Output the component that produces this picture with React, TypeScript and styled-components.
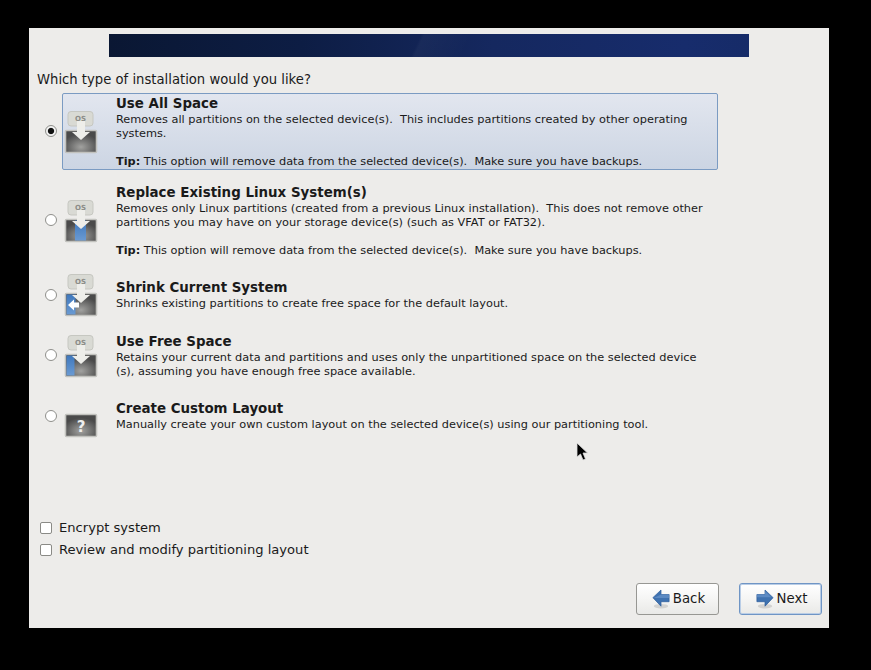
import styled, { createGlobalStyle } from 'styled-components';

const GlobalStyle = createGlobalStyle`
  html, body {
    margin: 0;
    padding: 0;
    background: #000;
  }
  body {
    font-family: "DejaVu Sans", sans-serif;
    color: #1a1a1a;
  }
`;

const Screen = styled.div`
  position: relative;
  width: 871px;
  height: 670px;
  padding: 28px 0 0 29px;
  box-sizing: border-box;
  background: #000;
  overflow: hidden;
`;

const Window = styled.main`
  width: 800px;
  height: 600px;
  box-sizing: border-box;
  padding: 6px 7px 13px 8px;
  background: #edecea;
  display: flex;
  flex-direction: column;
`;

const Banner = styled.div`
  width: 640px;
  height: 23px;
  margin-left: 72px;
  flex: none;
  background:
    linear-gradient(115deg, transparent 48%, rgba(255, 255, 255, 0.03) 48.5%, transparent 56%),
    linear-gradient(90deg, #0a1733 0%, #0d1d44 30%, #15285f 60%, #172c6c 90%, #162b68 100%);
`;

const Question = styled.h1`
  margin: 14px 0 5px;
  font-size: 13.2px;
  line-height: 17px;
  font-weight: 400;
`;

const Options = styled.div`
  display: flex;
  flex-direction: column;
  gap: 12px;
  width: 681px;
`;

const Option = styled.label`
  display: flex;
  align-items: center;
`;

const RadioSlot = styled.div`
  width: 25px;
  flex: none;
  display: flex;
  padding: 0 0 1px 8px;
  box-sizing: border-box;
`;

const Radio = styled.input.attrs({ type: 'radio', name: 'layout' })`
  appearance: none;
  width: 12px;
  height: 12px;
  margin: 0;
  border: 1px solid #8f8f8b;
  border-radius: 50%;
  background: #fff;
  box-sizing: border-box;

  &:checked {
    background: radial-gradient(circle, #111 0 2.6px, #555 3px, #f2f2f2 3.6px);
  }
`;

const Card = styled.div<{ $selected?: boolean }>`
  flex: 1;
  display: flex;
  align-items: center;
  gap: 18px;
  min-height: 48px;
  box-sizing: border-box;
  padding: 1px 2px 1px 1px;
  border: 1px solid ${(p) => (p.$selected ? '#7b9bc2' : 'transparent')};
  border-radius: 2px;
  background: ${(p) => (p.$selected ? 'linear-gradient(180deg, #e2e6ef 0%, #ccd5e3 100%)' : 'transparent')};
`;

const Body = styled.div<{ $short?: boolean }>`
  display: flex;
  flex-direction: column;
  padding-bottom: ${(p) => (p.$short ? '1px' : '0')};
`;

const Title = styled.div`
  font-size: 13.4px;
  line-height: 17px;
  font-weight: 700;
`;

const Description = styled.div`
  font-size: 11.33px;
  line-height: 14px;
  white-space: pre;
`;

const Checks = styled.div`
  margin-top: auto;
  display: flex;
  flex-direction: column;
  gap: 5px;
  padding-left: 3px;
`;

const CheckRow = styled.label`
  display: flex;
  align-items: center;
  gap: 7px;
  font-size: 13.1px;
  line-height: 17px;
`;

const Check = styled.input.attrs({ type: 'checkbox' })`
  appearance: none;
  width: 12px;
  height: 12px;
  margin: 0;
  border: 1px solid #8a8a86;
  border-radius: 2px;
  background: #fff;
`;

const Actions = styled.div`
  display: flex;
  justify-content: flex-end;
  gap: 20px;
  margin-top: 25px;
`;

const Button = styled.button<{ $focused?: boolean }>`
  width: 83px;
  height: 32px;
  padding: 0 0 1px 2px;
  display: flex;
  align-items: center;
  justify-content: center;
  gap: 3px;
  font-family: inherit;
  font-size: 13.3px;
  color: #1a1a1a;
  border: 1px solid ${(p) => (p.$focused ? '#6f95c5' : '#979793')};
  box-shadow: ${(p) => (p.$focused ? 'inset 0 0 0 1px #b9cde6' : 'none')};
  border-radius: 3px;
  background: linear-gradient(180deg, #fff 0%, #f6f6f5 45%, #e9e9e7 100%);
`;

const Cursor = styled.svg`
  position: absolute;
  left: 576px;
  top: 442px;
`;

type Kind = 'all' | 'replace' | 'shrink' | 'free' | 'custom';

function DiskIcon({ kind }: { kind: Kind }) {
  const id = `disk-${kind}`;
  return (
    <svg width="34" height="44" viewBox="0 0 34 44" style={{ flex: 'none' }}>
      <defs>
        <radialGradient id={id} cx="50%" cy="75%" r="60%">
          <stop offset="0%" stopColor="#a2a2a0" />
          <stop offset="100%" stopColor="#4a4a4a" />
        </radialGradient>
        <linearGradient id={`${id}-blue`} x1="0" y1="0" x2="0" y2="1">
          <stop offset="0%" stopColor="#3f78bd" />
          <stop offset="100%" stopColor="#6a9ad2" />
        </linearGradient>
      </defs>
      <rect x="1.5" y="20.5" width="31" height="22" rx="1" fill={`url(#${id})`} stroke="#c2c2be" strokeWidth="1.6" />
      {kind === 'replace' && <rect x="11" y="21.5" width="11" height="20" fill={`url(#${id}-blue)`} />}
      {(kind === 'shrink' || kind === 'free') && (
        <rect x="2.500" y="21.500" width={kind === 'shrink' ? 9 : 8} height="20" fill={`url(#${id}-blue)`} />
      )}
      {kind === 'custom' ? (
        <text x="17" y="38" textAnchor="middle" fontFamily="DejaVu Sans" fontSize="15" fontWeight="700" fill="#eee">
          ?
        </text>
      ) : (
        <>
          <rect x="4" y="1.500" width="25" height="14.500" rx="3" fill="#d9dad4" stroke="#c6c7c1" />
          <text x="16.500" y="11" textAnchor="middle" fontFamily="DejaVu Sans" fontSize="7" fontWeight="700" fill="#8b8c88">
            OS
          </text>
          <path d="M13 11h8v11h5l-9 8-9-8h5z" fill="#eeeeea" />
        </>
      )}
      {kind === 'shrink' && <path d="M4 32l6-5.500v3h5v5h-5v3z" fill="#fff" />}
    </svg>
  );
}

function BackArrow() {
  return (
    <svg width="18" height="20" viewBox="0 0 20 22">
      <ellipse cx="10" cy="19" rx="8" ry="2.500" fill="#000" opacity="0.12" />
      <path d="M1 9.500L10 1v5h9v8h-9v5z" fill="#3f72b0" stroke="#2f5f9c" strokeWidth="0.8" />
      <path d="M10 6h9v4h-17z" fill="#6f9bd0" opacity="0.6" />
    </svg>
  );
}

function NextArrow() {
  return (
    <svg width="18" height="20" viewBox="0 0 20 22">
      <ellipse cx="10" cy="19" rx="8" ry="2.500" fill="#000" opacity="0.12" />
      <path d="M19 9.500L10 1v5H1v8h9v5z" fill="#3f72b0" stroke="#2f5f9c" strokeWidth="0.8" />
      <path d="M1 6h9V2l7 7H1z" fill="#6f9bd0" opacity="0.6" />
    </svg>
  );
}

const TIP = 'This option will remove data from the selected device(s).  Make sure you have backups.';

export default function App() {
  return (
    <Screen>
      <GlobalStyle />
      <Window>
        <Banner />
        <Question>Which type of installation would you like?</Question>
        <Options>
          <Option>
            <RadioSlot>
              <Radio defaultChecked />
            </RadioSlot>
            <Card $selected>
              <DiskIcon kind="all" />
              <Body>
                <Title>Use All Space</Title>
                <Description>
                  {'Removes all partitions on the selected device(s).  This includes partitions created by other operating\nsystems.\n\n'}
                  <b>Tip:</b> {TIP}
                </Description>
              </Body>
            </Card>
          </Option>
          <Option>
            <RadioSlot>
              <Radio />
            </RadioSlot>
            <Card>
              <DiskIcon kind="replace" />
              <Body>
                <Title>Replace Existing Linux System(s)</Title>
                <Description>
                  {'Removes only Linux partitions (created from a previous Linux installation).  This does not remove other\npartitions you may have on your storage device(s) (such as VFAT or FAT32).\n\n'}
                  <b>Tip:</b> {TIP}
                </Description>
              </Body>
            </Card>
          </Option>
          <Option>
            <RadioSlot>
              <Radio />
            </RadioSlot>
            <Card>
              <DiskIcon kind="shrink" />
              <Body $short>
                <Title>Shrink Current System</Title>
                <Description>Shrinks existing partitions to create free space for the default layout.</Description>
              </Body>
            </Card>
          </Option>
          <Option>
            <RadioSlot>
              <Radio />
            </RadioSlot>
            <Card>
              <DiskIcon kind="free" />
              <Body>
                <Title>Use Free Space</Title>
                <Description>
                  {'Retains your current data and partitions and uses only the unpartitioned space on the selected device\n(s), assuming you have enough free space available.'}
                </Description>
              </Body>
            </Card>
          </Option>
          <Option>
            <RadioSlot>
              <Radio />
            </RadioSlot>
            <Card>
              <DiskIcon kind="custom" />
              <Body $short>
                <Title>Create Custom Layout</Title>
                <Description>Manually create your own custom layout on the selected device(s) using our partitioning tool.</Description>
              </Body>
            </Card>
          </Option>
        </Options>
        <Checks>
          <CheckRow>
            <Check />
            Encrypt system
          </CheckRow>
          <CheckRow>
            <Check />
            Review and modify partitioning layout
          </CheckRow>
        </Checks>
        <Actions>
          <Button>
            <BackArrow />
            Back
          </Button>
          <Button $focused>
            <NextArrow />
            Next
          </Button>
        </Actions>
      </Window>
      <Cursor width="13" height="20" viewBox="0 0 13 20">
        <path d="M1 1v14l3.500-3 2.500 6 2.500-1-2.500-6h4.500z" fill="#000" stroke="#ddd" strokeWidth="0.8" />
      </Cursor>
    </Screen>
  );
}
